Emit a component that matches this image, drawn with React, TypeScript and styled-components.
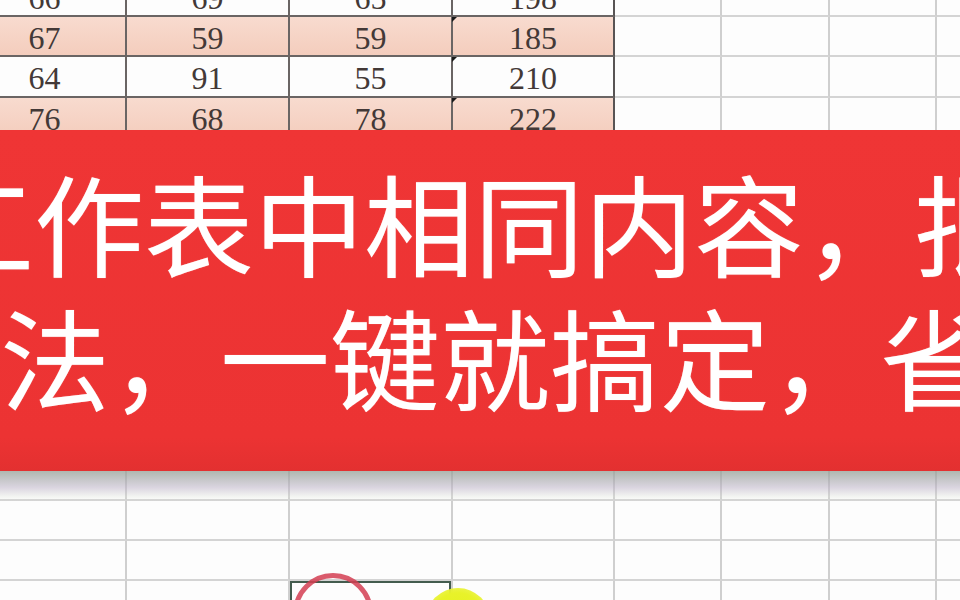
import React from "react";
import styled, { createGlobalStyle } from "styled-components";

const GlobalStyle = createGlobalStyle`
  html, body { margin: 0; padding: 0; background: #ffffff; overflow: hidden; }
  * { box-sizing: border-box; }
`;

const Page = styled.div`
  position: relative;
  width: 960px;
  height: 600px;
  overflow: hidden;
  background: #fdfdfd;
`;

const Sheet = styled.div`
  display: flex;
  flex-direction: column;
  margin-top: -23.3px;
  margin-left: -36px;
`;

const Row = styled.div`
  display: grid;
  grid-template-columns: 163px 163px 163px 162px 107px 108px 107px 107px 107px;
  height: 40.3px;
`;

const Cell = styled.div<{ $peach?: boolean; $table?: boolean; $edge?: boolean; $selected?: boolean }>`
  position: relative;
  display: flex;
  align-items: center;
  justify-content: center;
  padding-top: 4px;
  background: ${(p) => (p.$peach ? "linear-gradient(#f8dbcf, #f4cdbd)" : "#fdfdfd")};
  border-bottom: 2px solid ${(p) => (p.$table ? "#6a6564" : "#d4d4d4")};
  border-right: 2px solid ${(p) => (p.$edge ? "#585454" : p.$table ? "#6a6564" : "#cfcfcf")};
  box-shadow: ${(p) => (p.$selected ? "inset 0 0 0 2px #435c4e" : "none")};
  font-family: "Liberation Serif", "Times New Roman", serif;
  font-size: 32px;
  color: #433937;
  line-height: 1;
`;

const Marker = styled.span`
  position: absolute;
  top: 0;
  left: -1px;
  width: 0;
  height: 0;
  border-top: 5px solid #1a1a1a;
  border-right: 5px solid transparent;
`;

const Banner = styled.div`
  position: absolute;
  top: 130px;
  left: 0;
  right: 0;
  height: 341px;
  background: linear-gradient(#ef3535, #ec3333 90%, #e33030);
  padding-top: 24px;
  display: flex;
  flex-direction: column;

  &::after {
    content: "";
    position: absolute;
    left: 0;
    right: 0;
    top: 100%;
    height: 30px;
    background: linear-gradient(
      rgba(150, 160, 150, 0.75),
      rgba(190, 180, 200, 0.55) 55%,
      rgba(220, 225, 215, 0.3) 85%,
      rgba(255, 255, 255, 0)
    );
  }
`;

const BannerLine = styled.div<{ $shift: number }>`
  margin-left: ${(p) => p.$shift}px;
  white-space: nowrap;
  font-family: "Noto Sans CJK SC", "Noto Sans", sans-serif;
  font-size: 110px;
  letter-spacing: 0px;
  line-height: 134px;
  color: #ffffff;
  text-shadow: 0 0 1px rgba(255, 220, 220, 0.6);
`;

const RedRing = styled.div`
  position: absolute;
  left: 293px;
  top: 573px;
  width: 80px;
  height: 80px;
  border-radius: 50%;
  border: 5px solid rgba(212, 62, 82, 0.85);
`;

const YellowDot = styled.div`
  position: absolute;
  left: 426px;
  top: 588px;
  width: 64px;
  height: 64px;
  border-radius: 50%;
  background: radial-gradient(circle, #e4f01c 0%, #e8f22a 60%, rgba(238, 245, 90, 0.7) 100%);
`;

type RowData = { values: (number | null)[]; peach: boolean; table: boolean };

const tableRows: RowData[] = [
  { values: [66, 69, 65, 198], peach: false, table: true },
  { values: [67, 59, 59, 185], peach: true, table: true },
  { values: [64, 91, 55, 210], peach: false, table: true },
  { values: [76, 68, 78, 222], peach: true, table: true },
];

const emptyRows: RowData[] = Array.from({ length: 12 }, () => ({
  values: [null, null, null, null],
  peach: false,
  table: false,
}));

const rows = [...tableRows, ...emptyRows];
const extraCols = 5;

export default function App() {
  return (
    <>
      <GlobalStyle />
      <Page>
        <Sheet>
          {rows.map((r, ri) => (
            <Row key={ri}>
              {r.values.map((v, ci) => (
                <Cell
                  key={ci}
                  $peach={r.peach}
                  $table={r.table}
                  $edge={ci === 3 && r.table}
                  $selected={ri === 15 && ci === 2}
                >
                  {r.table && ci === 3 && <Marker />}
                  {v}
                </Cell>
              ))}
              {Array.from({ length: extraCols }).map((_, ci) => (
                <Cell key={`x${ci}`} />
              ))}
            </Row>
          ))}
        </Sheet>
        <Banner>
          <BannerLine $shift={-76}>工作表中相同内容，批</BannerLine>
          <BannerLine $shift={0}>法，一键就搞定，省</BannerLine>
        </Banner>
        <RedRing />
        <YellowDot />
      </Page>
    </>
  );
}
